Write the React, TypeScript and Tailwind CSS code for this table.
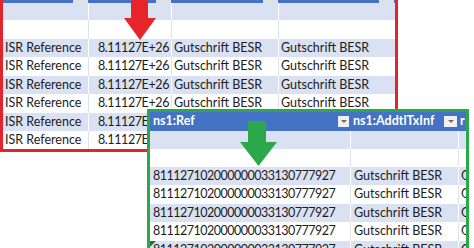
import React from "react";

const BLUE = "bg-[#d9e1f2]";

function RedRow({ h, band, cells }: { h: string; band: boolean; cells: string[] }) {
  const bg = band ? BLUE : "bg-white";
  const sep = band ? "border-white" : "border-[#dce3ef]";
  return (
    <div className={`flex ${h} ${bg}`}>
      <div className={`w-[86px] shrink-0 border-r ${sep} flex items-center pl-[2px]`}>{cells[0]}</div>
      <div className={`w-[83px] shrink-0 border-r ${sep} flex items-center justify-end pr-[2px] tracking-[-0.4px]`}>{cells[1]}</div>
      <div className={`w-[107px] shrink-0 border-r ${sep} flex items-center pl-[2px]`}>{cells[2]}</div>
      <div className={`w-[116px] shrink-0 flex items-center pl-[2px]`}>{cells[3]}</div>
    </div>
  );
}

function GreenRow({ h, band, cells, tri }: { h: string; band: boolean; cells: string[]; tri?: boolean }) {
  const bg = band ? BLUE : "bg-white";
  const sep = band ? "border-white" : "border-[#dce3ef]";
  return (
    <div className={`flex ${h} ${bg}`}>
      <div className={`relative w-[201px] shrink-0 border-r ${sep} flex items-center pl-[3px] tracking-[-0.5px]`}>
        {tri && (
          <div className="absolute left-0 top-0 w-0 h-0 border-t-[6px] border-t-[#1e7b34] border-r-[6px] border-r-transparent" />
        )}
        {cells[0]}
      </div>
      <div className={`w-[108px] shrink-0 border-r ${sep} flex items-center pl-[3px]`}>{cells[1]}</div>
      <div className="w-[7px] shrink-0 flex items-center pl-[2px] overflow-hidden">{cells[2]}</div>
    </div>
  );
}

function Dropdown({ cls }: { cls: string }) {
  return (
    <div className={`${cls} bg-[#f0f0f0] flex items-center justify-center`}>
      <div className="w-0 h-0 border-l-[3px] border-r-[3px] border-t-[3px] border-l-transparent border-r-transparent border-t-[#6b6b6b]" />
    </div>
  );
}

export default function App() {
  const isr = ["ISR Reference", "8.11127E+26", "Gutschrift BESR", "Gutschrift BESR"];
  const num = "811127102000000033130777927";
  const g = [num, "Gutschrift BESR", "G"];
  return (
    <div
      className="relative w-[474px] h-[248px] overflow-hidden bg-white text-[12.5px] text-[#1c1c1c]"
      style={{ fontFamily: "Lato, 'Open Sans', sans-serif" }}
    >
      {/* red-framed table */}
      <div className="w-[398px] -mt-[16px] border-x-[3px] border-b-[3px] border-[#e1252c]">
        <div className="flex h-[19px] bg-[#4472c4] items-end">
          <div className="w-[86px] flex justify-end pr-[1px]"><div className="w-[15px] h-[13px] bg-[#dde1e8]" /></div>
          <div className="w-[83px] flex justify-end pr-[1px]"><div className="w-[15px] h-[13px] bg-[#dde1e8]" /></div>
          <div className="w-[107px] flex justify-end pr-[1px]"><div className="w-[15px] h-[13px] bg-[#dde1e8]" /></div>
          <div className="w-[116px] flex justify-end pr-[1px]"><div className="w-[15px] h-[13px] bg-[#dde1e8]" /></div>
        </div>
        <RedRow h="h-[17px]" band cells={["", "", "", ""]} />
        <RedRow h="h-[19px]" band={false} cells={["", "", "", ""]} />
        <RedRow h="h-[18px]" band cells={isr} />
        <RedRow h="h-[19px]" band={false} cells={isr} />
        <RedRow h="h-[18px]" band cells={isr} />
        <RedRow h="h-[19px]" band={false} cells={isr} />
        <RedRow h="h-[18px]" band cells={isr} />
        <RedRow h="h-[18px]" band={false} cells={isr} />
      </div>

      {/* red arrow */}
      <svg className="absolute left-[123px] top-0" width="34" height="41" viewBox="0 0 34 41">
        <polygon points="8,0 25,0 25,18 33,18 17,40 1,18 8,18" fill="#e8242b" />
      </svg>

      {/* green-framed table overlay */}
      <div className="absolute left-[147px] top-[109px] w-[322px] h-[150px] border-[3px] border-[#2aa84a] bg-white overflow-hidden">
        <div className="flex h-[19px] bg-[#4472c4] text-white font-bold items-center">
          <div className="w-[201px] shrink-0 flex items-center pl-[3px] pr-[2px]">
            <span className="flex-1">ns1:Ref</span>
            <Dropdown cls="w-[11px] h-[11px]" />
          </div>
          <div className="w-[108px] shrink-0 flex items-center pl-[2px] pr-[2px]">
            <span className="flex-1">ns1:AddtlTxInf</span>
            <Dropdown cls="w-[13px] h-[11px]" />
          </div>
          <div className="w-[7px] shrink-0 overflow-hidden pl-[1px]">r</div>
        </div>
        <GreenRow h="h-[18px]" band cells={["", "", ""]} />
        <GreenRow h="h-[18px]" band={false} cells={["", "", ""]} />
        <GreenRow h="h-[18px]" band cells={g} />
        <GreenRow h="h-[19px]" band={false} cells={g} />
        <GreenRow h="h-[18px]" band cells={g} />
        <GreenRow h="h-[19px]" band={false} cells={g} />
        <GreenRow h="h-[18px]" band cells={g} tri />
      </div>

      {/* green arrow */}
      <svg className="absolute left-[240px] top-[121px]" width="38" height="46" viewBox="0 0 38 46">
        <polygon points="8,0 26,0 26,21 37,21 18.5,45 0,21 8,21" fill="#2aa84a" />
      </svg>
    </div>
  );
}
